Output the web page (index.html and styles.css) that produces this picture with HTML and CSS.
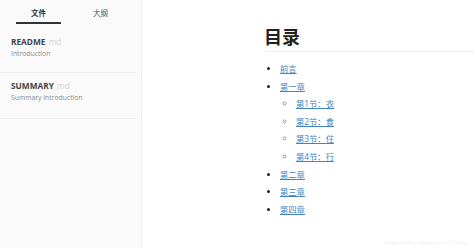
FILE: index.html
```html
<!DOCTYPE html>
<html lang="zh">
<head>
<meta charset="utf-8">
<link rel="stylesheet" href="styles.css">
</head>
<body>
<div class="app">
  <aside class="sidebar">
    <div class="tabs">
      <div class="tab active">文件</div>
      <div class="tab">大纲</div>
    </div>
    <div class="file">
      <div class="file-name">README<span class="ext">.md</span></div>
      <div class="file-desc">Introduction</div>
    </div>
    <div class="file">
      <div class="file-name">SUMMARY<span class="ext">.md</span></div>
      <div class="file-desc">Summary Introduction</div>
    </div>
  </aside>
  <main class="content">
    <h1 class="title">目录</h1>
    <ul class="toc">
      <li><a href="#">前言</a></li>
      <li><a href="#">第一章</a>
        <ul class="sub">
          <li><a href="#">第1节：衣</a></li>
          <li><a href="#">第2节：食</a></li>
          <li><a href="#">第3节：住</a></li>
          <li><a href="#">第4节：行</a></li>
        </ul>
      </li>
      <li><a href="#">第二章</a></li>
      <li><a href="#">第三章</a></li>
      <li><a href="#">第四章</a></li>
    </ul>
  </main>
</div>
<div class="watermark">https://blog.csdn.net/u013/cvc</div>
</body>
</html>
```
FILE: styles.css
```css
html, body {
  margin: 0;
  padding: 0;
  background: #ffffff;
}
body {
  font-family: "Open Sans", "Noto Sans CJK SC", sans-serif;
  color: #333333;
  width: 474px;
  height: 251px;
  overflow: hidden;
  position: relative;
}
.app {
  display: flex;
  align-items: flex-start;
}
.sidebar {
  width: 141px;
  height: 248px;
  background: #fafafa;
  border-right: 1px solid #efefef;
  flex: none;
}
.tabs {
  display: flex;
  gap: 17px;
  padding: 6px 0 0 16px;
  height: 18px;
}
.tab {
  width: 45px;
  text-align: center;
  font-size: 7.5px;
  line-height: 15px;
  color: #555;
}
.tab.active {
  color: #333;
  font-weight: bold;
  border-bottom: 2px solid #333;
  height: 16px;
}
.file {
  padding: 12px 0 0 11px;
  height: 36px;
  border-bottom: 1px solid #efefef;
  margin-right: 4px;
}
.file + .file {
  padding-top: 7px;
  height: 38px;
}
.file-name {
  font-size: 8.3px;
  font-weight: bold;
  line-height: 12px;
  color: #444;
}
.ext {
  font-weight: normal;
  color: #d4d4d4;
  margin-left: 1px;
}
.file-desc {
  font-size: 6.8px;
  line-height: 12px;
  color: #8a8a8a;
}
.content {
  flex: 1;
  padding-left: 121px;
}
.title {
  margin: 25px 0 0 0;
  font-size: 18px;
  line-height: 24px;
  font-weight: bold;
  color: #222;
  padding: 0 0 2px 1px;
  border-bottom: 1px solid #f0f0f0;
}
.toc {
  margin: 8px 0 0 0;
  padding-left: 17px;
  font-size: 8.3px;
  line-height: 17.6px;
}
.toc .sub {
  margin: 0;
  padding-left: 16px;
  list-style-type: circle;
}
.toc li::marker {
  color: #222;
}
.toc .sub li::marker {
  color: #999;
}
.toc a {
  color: #4183c4;
  text-decoration: underline;
}
.watermark {
  position: absolute;
  right: 5px;
  top: 239px;
  font-size: 6px;
  line-height: 8px;
  white-space: nowrap;
  color: #f0f0f0;
  font-family: "Open Sans", sans-serif;
}
```
